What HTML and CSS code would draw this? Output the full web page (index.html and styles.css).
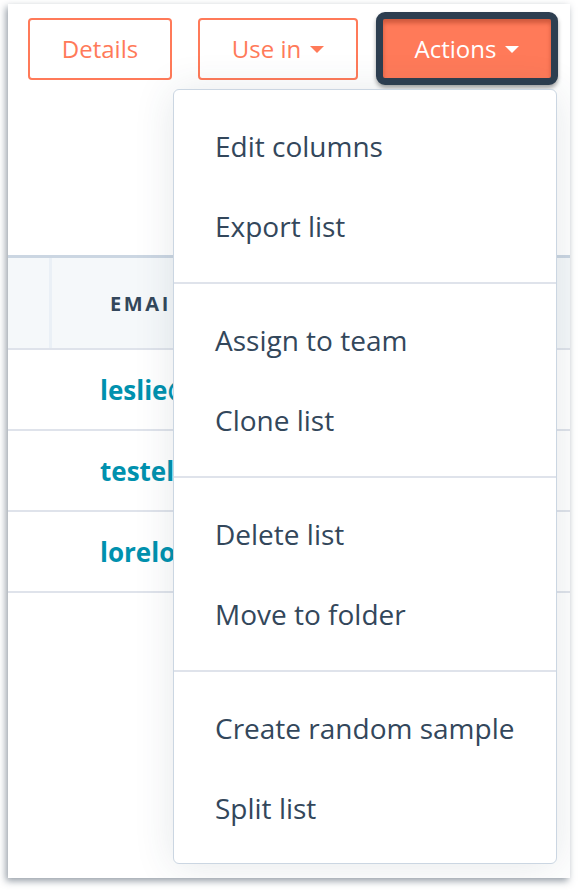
FILE: index.html
```html
<!DOCTYPE html>
<html>
<head>
<meta charset="utf-8">
<link rel="stylesheet" href="styles.css">
</head>
<body>
<div class="panel">
  <div class="toolbar">
    <button class="btn btn-outline btn-details">Details</button>
    <button class="btn btn-outline btn-usein">Use in <span class="caret caret-orange"></span></button>
    <button class="btn btn-primary">Actions <span class="caret caret-white"></span></button>
  </div>
  <div class="table">
    <div class="thead">
      <div class="cell cell-check"></div>
      <div class="cell cell-email th">EMAIL</div>
      <div class="cell cell-rest"></div>
    </div>
    <div class="row"><div class="cell cell-check"></div><div class="cell cell-email link">leslie@</div><div class="cell cell-rest"></div></div>
    <div class="row"><div class="cell cell-check"></div><div class="cell cell-email link">testel</div><div class="cell cell-rest"></div></div>
    <div class="row"><div class="cell cell-check"></div><div class="cell cell-email link">lorelo</div><div class="cell cell-rest"></div></div>
  </div>
  <div class="dropdown">
    <div class="group">
      <div class="item">Edit columns</div>
      <div class="item">Export list</div>
    </div>
    <div class="group">
      <div class="item">Assign to team</div>
      <div class="item">Clone list</div>
    </div>
    <div class="group">
      <div class="item">Delete list</div>
      <div class="item">Move to folder</div>
    </div>
    <div class="group">
      <div class="item">Create random sample</div>
      <div class="item">Split list</div>
    </div>
  </div>
</div>
</body>
</html>
```
FILE: styles.css
```css
* { box-sizing: border-box; }
html, body { margin: 0; padding: 0; background: #ffffff; }
body {
  font-family: "Open Sans", "Noto Sans", sans-serif;
  color: #33475b;
  width: 578px;
  height: 890px;
  overflow: hidden;
}
.panel {
  position: relative;
  margin: 4px 0 0 8px;
  width: 562px;
  height: 874px;
  background: #ffffff;
  box-shadow: -2px 3px 7px rgba(45, 62, 80, 0.5);
  overflow: hidden;
}
.toolbar {
  display: flex;
  align-items: center;
  padding: 8px 0 0 20px;
  height: 81px;
}
.btn {
  font-family: "Open Sans", "Noto Sans", sans-serif;
  font-size: 24px;
  border-radius: 4px;
  display: flex;
  align-items: center;
  justify-content: center;
  padding: 0;
  cursor: pointer;
}
.btn-outline {
  height: 62px;
  background: #ffffff;
  border: 2px solid #ff7a59;
  color: #ff7a59;
}
.btn-details { width: 144px; }
.btn-usein { width: 160px; margin-left: 26px; }
.btn-primary {
  width: 182px;
  height: 73px;
  margin-left: 18px;
  background: #ff7a59;
  color: #ffffff;
  border: 7px solid #2d3e50;
  border-radius: 9px;
  box-shadow: inset 0 4px 4px rgba(120, 30, 10, 0.35), 0 3px 4px rgba(0, 0, 0, 0.35);
}
.caret {
  display: inline-block;
  width: 0;
  height: 0;
  margin-left: 9px;
  margin-top: 2px;
  border-left: 7px solid transparent;
  border-right: 7px solid transparent;
}
.caret-orange { border-top: 7px solid #ff7a59; }
.caret-white { border-top: 7px solid #ffffff; }

.table {
  margin-top: 170px;
  border-top: 3px solid #cbd6e2;
  width: 562px;
}
.thead, .row {
  display: flex;
}
.thead {
  height: 92px;
  background: #f5f8fa;
  border-bottom: 2px solid #dfe3eb;
}
.row {
  height: 81px;
  border-bottom: 2px solid #dfe3eb;
}
.row:first-of-type { height: 82px; }
.cell {
  display: flex;
  align-items: center;
}
.cell-check {
  width: 44px;
}
.thead .cell-check {
  border-right: 3px solid #eaf0f6;
}
.cell-email {
  width: 121px;
  overflow: hidden;
  padding-left: 58px;
  white-space: nowrap;
}
.row .cell-email { padding-left: 48px; width: 121px; }
.thead .cell-email { width: 118px; }
.cell-rest { flex: 1; }
.th {
  font-size: 20px;
  font-weight: 700;
  letter-spacing: 2.6px;
  color: #33475b;
}
.link {
  font-size: 26px;
  font-weight: 700;
  color: #0091ae;
}

.dropdown {
  position: absolute;
  left: 165px;
  top: 85px;
  width: 384px;
  height: 775px;
  background: #ffffff;
  border: 1px solid #cbd6e2;
  border-radius: 6px;
  box-shadow: 0 2px 40px rgba(45, 62, 80, 0.12);
}
.group {
  padding: 16px 0;
  border-bottom: 2px solid #dfe3eb;
}
.group:last-child { border-bottom: none; }
.item {
  height: 80px;
  display: flex;
  align-items: center;
  padding-left: 41px;
  font-size: 28px;
  color: #33475b;
}
```
